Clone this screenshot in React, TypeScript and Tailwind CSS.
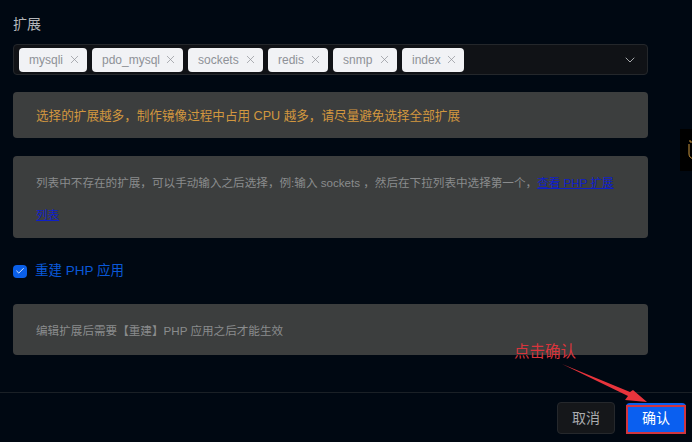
import { ChevronDown, X, Check } from 'lucide-react'

const tags = [
  { name: 'mysqli', w: 'w-[68px]' },
  { name: 'pdo_mysql', w: 'w-[91px]' },
  { name: 'sockets', w: 'w-[75px]' },
  { name: 'redis', w: 'w-[60px]' },
  { name: 'snmp', w: 'w-[64px]' },
  { name: 'index', w: 'w-[62px]' },
]

const font = "font-['Liberation_Sans','Noto_Sans_CJK_SC',sans-serif]"

export default function App() {
  return (
    <div className={`relative h-[442px] w-[692px] overflow-hidden bg-[#000812] ${font}`}>
      <div className="flex h-[392px] w-[648px] flex-col pl-[13px] pt-[14px]">
        <div className="h-5 text-sm leading-5 text-[#b4b6b9]">扩展</div>
        <div className="mt-[10px] flex h-[31px] items-center rounded border border-[#24272b] bg-[#101216] pl-[5px] pr-[9px]">
          <div className="flex flex-1 gap-[5px]">
            {tags.map((t) => (
              <div
                key={t.name}
                className={`flex h-6 items-center justify-between rounded bg-[#f1f2f5] pl-[10px] pr-[6px] text-xs text-[#8e9197] ${t.w}`}
              >
                <span>{t.name}</span>
                <X className="h-[13px] w-[13px] text-[#8e9197]" strokeWidth={1.3} />
              </div>
            ))}
          </div>
          <ChevronDown className="h-4 w-4 text-[#a6a8ab]" strokeWidth={1.5} />
        </div>

        <div className="mt-[17px] flex h-[46px] items-center rounded bg-[#3c3e3e] px-[23px] pt-[3px] text-[12.6px] text-[#d2973f]">
          选择的扩展越多，制作镜像过程中占用 CPU 越多，请尽量避免选择全部扩展
        </div>

        <div className="mt-[18px] h-[82px] rounded bg-[#3c3e3e] py-[10px] pl-[23px] pr-[31px] pt-[11px] text-[11.6px] leading-[32px] text-[#8a8c8d]">
          列表中不存在的扩展，可以手动输入之后选择，例:输入 sockets ，然后在下拉列表中选择第一个，
          <a href="#" className="text-[#0f1fc8] underline">
            查看 PHP 扩展列表
          </a>
        </div>

        <div className="mt-6 flex h-[18px] items-center gap-2">
          <div className="flex h-[13px] w-[14px] items-center justify-center rounded-sm bg-[#0a5fe8]">
            <Check className="h-[10px] w-[10px] text-white" strokeWidth={2} />
          </div>
          <span className="text-[13.5px] text-[#0a58d8]">重建 PHP 应用</span>
        </div>

        <div className="mt-6 flex h-[51px] items-center rounded bg-[#3c3e3e] px-[23px] pt-[3px] text-[11.6px] text-[#8a8c8d]">
          编辑扩展后需要【重建】PHP 应用之后才能生效
        </div>
      </div>

      <div className="flex h-[50px] items-start justify-end gap-[11px] border-t border-[#1a2026] pr-[6px] pt-[9px]">
        <button className="h-8 w-[58px] rounded border border-[#25282c] bg-[#15171a] pb-[1px] text-sm text-[#a9abae]">取消</button>
        <button className="relative mt-[1px] h-[31px] w-[60px] rounded-t bg-[#0a5ff0] pb-[2px] text-sm text-white">
          确认
          <span className="absolute inset-x-0 bottom-0 top-[2px] border-2 border-[#d0353f]" />
        </button>
      </div>

      {/* annotation over the page */}
      <span className="absolute left-[514px] top-[342px] text-[15.5px] leading-5 text-[#d8353c]">点击确认</span>
      <svg className="absolute left-[555px] top-[360px]" width="96" height="48" viewBox="0 0 96 48">
        <path d="M7 4 L75 32 L78 30 L92 42 L70 40 L73 36 Z" fill="#e8343c" />
      </svg>

      {/* floating side widget */}
      <div className="absolute left-[680px] top-[129px] flex h-[42px] w-3 items-center bg-black pl-2">
        <svg width="4" height="22" viewBox="0 0 4 22" className="shrink-0 overflow-visible">
          <path d="M8 3 H2 V1 M1 5 V15 Q1 19 6 20" fill="none" stroke="#c9963f" strokeWidth="1" />
        </svg>
      </div>
    </div>
  )
}
